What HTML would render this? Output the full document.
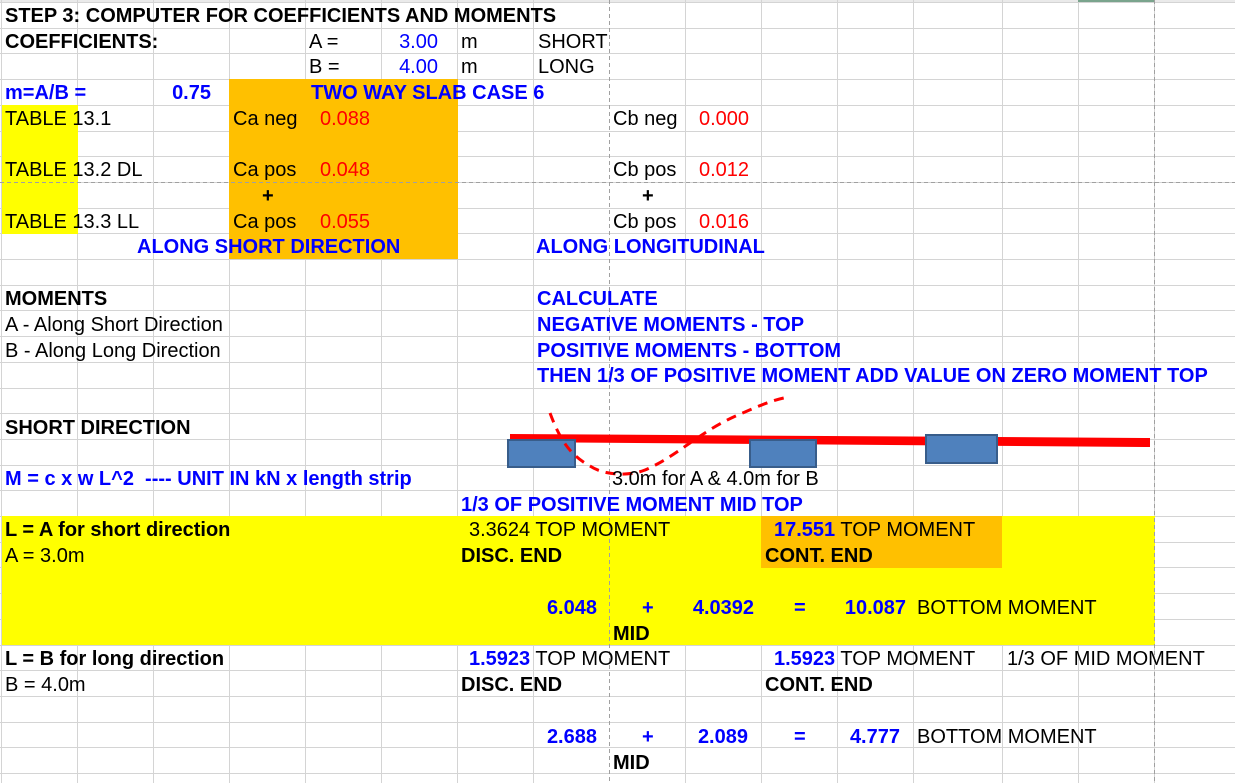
<!DOCTYPE html>
<html><head><meta charset="utf-8"><style>
html,body{margin:0;padding:0;background:#fff;width:1235px;height:783px;overflow:hidden}
body{position:relative;font-family:"Liberation Sans",Arial,sans-serif;font-size:20px;color:#000}
.t{position:absolute;line-height:25.7px;height:25.7px;white-space:nowrap;margin-top:2px}
.b{font-weight:bold}.bl{color:#0000ff}.r{color:#ff0000}
.f{position:absolute}
svg{position:absolute;left:0;top:0}
</style></head><body>
<svg width="1235" height="783">
<g stroke="#d4d4d4" stroke-width="1">
<line x1="1.5" y1="0" x2="1.5" y2="783"/>
<line x1="77.5" y1="0" x2="77.5" y2="783"/><line x1="153.5" y1="0" x2="153.5" y2="783"/>
<line x1="229.5" y1="0" x2="229.5" y2="783"/><line x1="305.5" y1="0" x2="305.5" y2="783"/>
<line x1="381.5" y1="0" x2="381.5" y2="783"/><line x1="457.5" y1="0" x2="457.5" y2="783"/>
<line x1="533.5" y1="0" x2="533.5" y2="783"/>
<line x1="685.5" y1="0" x2="685.5" y2="783"/><line x1="761.5" y1="0" x2="761.5" y2="783"/>
<line x1="837.5" y1="0" x2="837.5" y2="783"/><line x1="913.5" y1="0" x2="913.5" y2="783"/>
<line x1="1002.5" y1="0" x2="1002.5" y2="783"/><line x1="1078.5" y1="0" x2="1078.5" y2="783"/>
<line x1="1154.5" y1="0" x2="1154.5" y2="783"/>
</g>
<g stroke="#d4d4d4" id="h"></g>
</svg>
<div class="f" style="left:229px;top:79px;width:229px;height:180px;background:#ffc000"></div>
<div class="f" style="left:2px;top:105px;width:76px;height:129px;background:#ffff00"></div>
<div class="f" style="left:2px;top:516px;width:1153px;height:129px;background:#ffff00"></div>
<div class="f" style="left:761px;top:516px;width:241px;height:52px;background:#ffc000"></div>
<div class="f" style="left:1078px;top:0;width:77px;height:2px;background:#217346"></div>
<svg width="1235" height="783">
<line x1="0" y1="1" x2="1235" y2="1" stroke="#d4d4d4"/>
<line x1="609.5" y1="0" x2="609.5" y2="783" stroke="#a0a0a0" stroke-dasharray="4,3"/>
<line x1="1154.5" y1="0" x2="1154.5" y2="783" stroke="#a0a0a0" stroke-dasharray="4,3"/>
<line x1="0" y1="182.5" x2="1235" y2="182.5" stroke="#a0a0a0" stroke-dasharray="4,3"/>
<polygon points="510,434 1150,438 1150,447 510,442" fill="#ff0000"/>
<rect x="508" y="440" width="67" height="27" fill="#4f81bd" stroke="#385d8a" stroke-width="2"/>
<rect x="750" y="440" width="66" height="27" fill="#4f81bd" stroke="#385d8a" stroke-width="2"/>
<rect x="926" y="435" width="71" height="28" fill="#4f81bd" stroke="#385d8a" stroke-width="2"/>
<path d="M550,413 C560,440 570,455 590,466 C605,476 630,476 645,470 C680,455 700,430 745,412 C765,403 780,398 790,397" fill="none" stroke="#ff0000" stroke-width="3" stroke-dasharray="10,7"/>
</svg>
<div class="t b" style="left:5px;top:2px">STEP 3: COMPUTER FOR COEFFICIENTS AND MOMENTS</div>
<div class="t b" style="left:5px;top:28px">COEFFICIENTS:</div>
<div class="t" style="left:309px;top:28px">A =</div>
<div class="t bl" style="right:797px;top:28px">3.00</div>
<div class="t" style="left:461px;top:28px">m</div>
<div class="t" style="left:538px;top:28px">SHORT</div>
<div class="t" style="left:309px;top:53px">B =</div>
<div class="t bl" style="right:797px;top:53px">4.00</div>
<div class="t" style="left:461px;top:53px">m</div>
<div class="t" style="left:538px;top:53px">LONG</div>
<div class="t b bl" style="left:5px;top:79px">m=A/B =</div>
<div class="t b bl" style="right:1024px;top:79px">0.75</div>
<div class="t b bl" style="left:311px;top:79px">TWO WAY SLAB CASE 6</div>
<div class="t" style="left:5px;top:105px">TABLE 13.1</div>
<div class="t" style="left:233px;top:105px">Ca neg</div>
<div class="t r" style="left:320px;top:105px">0.088</div>
<div class="t" style="left:613px;top:105px">Cb neg</div>
<div class="t r" style="left:699px;top:105px">0.000</div>
<div class="t" style="left:5px;top:156px">TABLE 13.2 DL</div>
<div class="t" style="left:233px;top:156px">Ca pos</div>
<div class="t r" style="left:320px;top:156px">0.048</div>
<div class="t" style="left:613px;top:156px">Cb pos</div>
<div class="t r" style="left:699px;top:156px">0.012</div>
<div class="t b" style="left:262px;top:182px">+</div>
<div class="t b" style="left:642px;top:182px">+</div>
<div class="t" style="left:5px;top:208px">TABLE 13.3 LL</div>
<div class="t" style="left:233px;top:208px">Ca pos</div>
<div class="t r" style="left:320px;top:208px">0.055</div>
<div class="t" style="left:613px;top:208px">Cb pos</div>
<div class="t r" style="left:699px;top:208px">0.016</div>
<div class="t b bl" style="left:137px;top:233px">ALONG SHORT DIRECTION</div>
<div class="t b bl" style="left:536px;top:233px">ALONG LONGITUDINAL</div>
<div class="t b" style="left:5px;top:285px">MOMENTS</div>
<div class="t b bl" style="left:537px;top:285px">CALCULATE</div>
<div class="t" style="left:5px;top:311px">A - Along Short Direction</div>
<div class="t b bl" style="left:537px;top:311px">NEGATIVE MOMENTS - TOP</div>
<div class="t" style="left:5px;top:337px">B - Along Long Direction</div>
<div class="t b bl" style="left:537px;top:337px">POSITIVE MOMENTS - BOTTOM</div>
<div class="t b bl" style="left:537px;top:362px">THEN 1/3 OF POSITIVE MOMENT ADD VALUE ON ZERO MOMENT TOP</div>
<div class="t b" style="left:5px;top:414px">SHORT DIRECTION</div>
<div class="t b bl" style="left:5px;top:465px">M = c x w L^2 &nbsp;---- UNIT IN kN x length strip</div>
<div class="t" style="left:612px;top:465px">3.0m for A &amp; 4.0m for B</div>
<div class="t b bl" style="left:461px;top:491px">1/3 OF POSITIVE MOMENT MID TOP</div>
<div class="t b" style="left:5px;top:516px">L = A for short direction</div>
<div class="t" style="left:469px;top:516px">3.3624 TOP MOMENT</div>
<div class="t" style="left:774px;top:516px"><span class="b bl">17.551</span> TOP MOMENT</div>
<div class="t" style="left:5px;top:542px">A = 3.0m</div>
<div class="t b" style="left:461px;top:542px">DISC. END</div>
<div class="t b" style="left:765px;top:542px">CONT. END</div>
<div class="t b bl" style="right:638px;top:594px">6.048</div>
<div class="t b bl" style="left:642px;top:594px">+</div>
<div class="t b bl" style="right:481px;top:594px">4.0392</div>
<div class="t b bl" style="left:794px;top:594px">=</div>
<div class="t b bl" style="right:329px;top:594px">10.087</div>
<div class="t" style="left:917px;top:594px">BOTTOM MOMENT</div>
<div class="t b" style="left:613px;top:620px">MID</div>
<div class="t b" style="left:5px;top:645px">L = B for long direction</div>
<div class="t" style="left:469px;top:645px"><span class="b bl">1.5923</span> TOP MOMENT</div>
<div class="t" style="left:774px;top:645px"><span class="b bl">1.5923</span> TOP MOMENT</div>
<div class="t" style="left:1007px;top:645px">1/3 OF MID MOMENT</div>
<div class="t" style="left:5px;top:671px">B = 4.0m</div>
<div class="t b" style="left:461px;top:671px">DISC. END</div>
<div class="t b" style="left:765px;top:671px">CONT. END</div>
<div class="t b bl" style="right:638px;top:723px">2.688</div>
<div class="t b bl" style="left:642px;top:723px">+</div>
<div class="t b bl" style="right:487px;top:723px">2.089</div>
<div class="t b bl" style="left:794px;top:723px">=</div>
<div class="t b bl" style="right:335px;top:723px">4.777</div>
<div class="t" style="left:917px;top:723px">BOTTOM MOMENT</div>
<div class="t b" style="left:613px;top:749px">MID</div>
<script>
var g=document.getElementById('h'),s='';
for(var i=0;i<31;i++){var y=Math.round(2+25.7*i)+0.5;s+='<line x1="0" y1="'+y+'" x2="1235" y2="'+y+'"/>';}
g.innerHTML=s;
</script>
</body></html>
